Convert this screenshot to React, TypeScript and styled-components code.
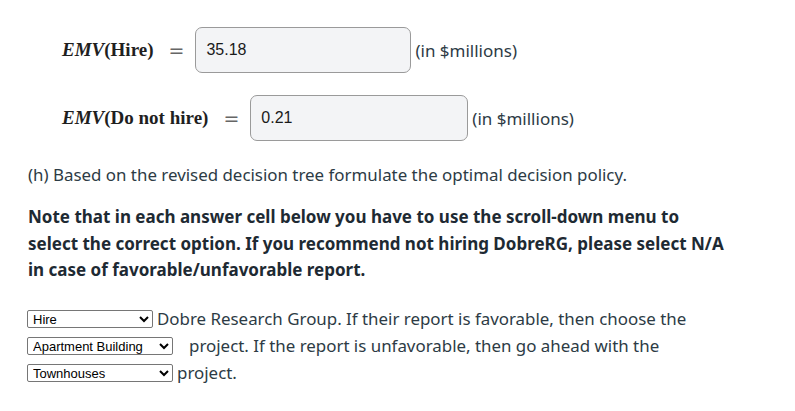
import React from 'react'
import styled, { createGlobalStyle } from 'styled-components';

const GlobalStyle = createGlobalStyle`
  html, body {
    margin: 0;
    padding: 0;
    background: #FFFFFF;
  }
  body {
    font-family: "Noto Sans", "Open Sans", sans-serif;
    color: #2D3B45;
  }
`;

const Page = styled.div`
  padding: 27px 28px 0;
  font-size: 17px;
`;

const EquationRow = styled.div`
  display: flex;
  align-items: center;
  padding-left: 34px;
  margin-bottom: 22px;
`;

const MathLabel = styled.span`
  font-family: "Liberation Serif", "Times New Roman", serif;
  font-weight: 700;
  font-size: 19px;
  color: #1f1f1f;

  i {
    font-style: italic;
  }
`;

const Equals = styled.span`
  font-family: "DejaVu Sans", sans-serif;
  font-size: 19px;
  color: #666;
  margin: 0 11px 0 15px;
`;

const AnswerBox = styled.div<{ $width: number }>`
  width: ${p => p.$width}px;
  height: 46px;
  box-sizing: border-box;
  display: flex;
  align-items: center;
  padding-left: 10px;
  background: #F3F4F6;
  border: 1px solid #9a9a9a;
  border-radius: 7px;
  font-family: "Liberation Sans", Arial, sans-serif;
  font-size: 16px;
  color: #1a1a1a;
`;

const Unit = styled.span`
  margin-left: 4px;
`;

const Paragraph = styled.p`
  margin: 16px 0 0;
  line-height: 24px;
  font-size: 16.9px;
`;

const Note = styled.p`
  margin: 17px 0 0;
  font-weight: 700;
  font-size: 17px;
  line-height: 26.5px;
  color: #1e2a33;
`;

const Policy = styled.div`
  margin-top: 21px;
  line-height: 27px;
  font-size: 16.9px;
`;

const Select = styled.select<{ $width: number }>`
  width: ${p => p.$width}px;
  height: 18px;
  font-family: "Liberation Sans", Arial, sans-serif;
  font-size: 13px;
  color: #000;
  vertical-align: 1px;
  margin: 0 4px 0 -1px;
  padding: 0 0 0 1px;
  border: 1px solid #767676;
  border-radius: 2px;
  background: #fff;
`;

const Gap = styled.span`
  display: inline-block;
  width: 12px;
`;

const Next = styled.p`
  margin: 22px 0 0;
  font-size: 16.9px;
`;

const App = () => {
  return (
    <Page>
      <GlobalStyle />
      <EquationRow>
        <MathLabel><i>EMV</i>(Hire)</MathLabel>
        <Equals>=</Equals>
        <AnswerBox $width={216}>35.18</AnswerBox>
        <Unit>(in $millions)</Unit>
      </EquationRow>
      <EquationRow>
        <MathLabel><i>EMV</i>(Do not hire)</MathLabel>
        <Equals>=</Equals>
        <AnswerBox $width={218}>0.21</AnswerBox>
        <Unit>(in $millions)</Unit>
      </EquationRow>

      <Paragraph>(h) Based on the revised decision tree formulate the optimal decision policy.</Paragraph>

      <Note>
        Note that in each answer cell below you have to use the scroll-down menu to
        <br />
        select the correct option. If you recommend not hiring DobreRG, please select N/A
        <br />
        in case of favorable/unfavorable report.
      </Note>

      <Policy>
        <Select $width={126} defaultValue="Hire">
          <option>Hire</option>
          <option>Do not hire</option>
        </Select>
        Dobre Research Group. If their report is favorable, then choose the
        <br />
        <Select $width={146} defaultValue="Apartment Building">
          <option>Apartment Building</option>
          <option>Townhouses</option>
          <option>N/A</option>
        </Select>
        <Gap />project. If the report is unfavorable, then go ahead with the
        <br />
        <Select $width={146} defaultValue="Townhouses">
          <option>Apartment Building</option>
          <option>Townhouses</option>
          <option>N/A</option>
        </Select>
        project.
      </Policy>

      <Next>(i) How much would Hendri Development Group be willing to pay at most for the information?</Next>
    </Page>
  )
}

export default App
